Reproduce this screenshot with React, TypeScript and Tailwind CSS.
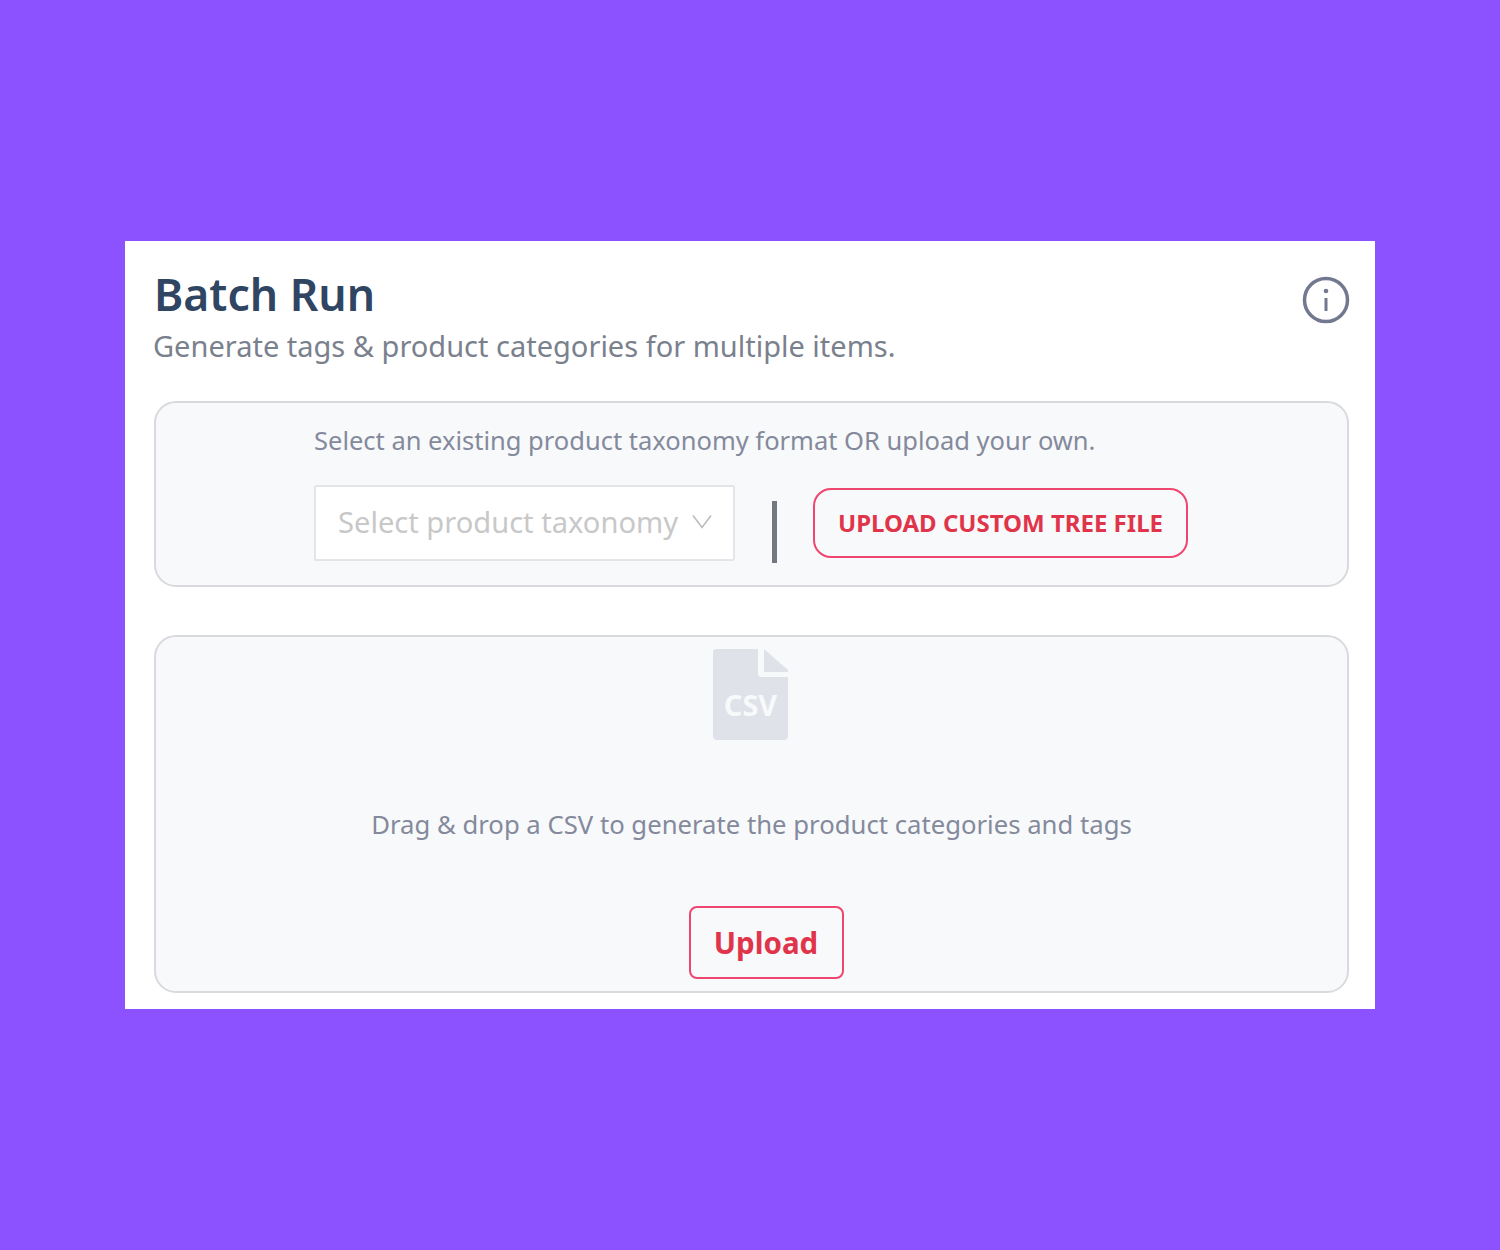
export default function App() {
  return (
    <div className="h-[1250px] bg-[#8c52ff] flex items-center justify-center font-['Noto_Sans',sans-serif]">
      <div className="w-[1250px] h-[768px] bg-white pl-[29px] pr-[26px] pt-[25px] flex flex-col">
        <div className="flex justify-between h-[135px]">
          <div>
            <h1 className="text-[44.5px] leading-[56px] font-semibold text-[#2f4562]">Batch Run</h1>
            <p className="text-[29px] leading-[40px] mt-[4px] text-[#7a818d] -ml-px">Generate tags &amp; product categories for multiple items.</p>
          </div>
          <svg className="mt-[10px] -mr-px" width="48" height="48" viewBox="0 0 48 48" fill="none">
            <circle cx="24" cy="24" r="21.5" stroke="#727890" strokeWidth="3.5" />
            <circle cx="24" cy="15" r="2.3" fill="#727890" />
            <path d="M24 22v13" stroke="#727890" strokeWidth="3" />
          </svg>
        </div>
        <div className="h-[186px] rounded-[22px] border-2 border-[#d8dade] bg-[#f8f9fb] pl-[158px] pt-[19px]">
          <p className="text-[25.5px] leading-[36px] text-[#848a9c]">Select an existing product taxonomy format OR upload your own.</p>
          <div className="flex items-center mt-[24px]">
            <div className="w-[421px] h-[76px] bg-white border-2 border-[#e3e5e8] rounded-[2px] pl-[22px] pr-[20px] flex items-center justify-between">
              <span className="text-[29.1px] text-[#c8c8c8]">Select product taxonomy</span>
              <svg width="22" height="15" viewBox="0 0 22 15" fill="none" className="-mt-[2px] ml-px">
                <path d="M2 1.5l9 12 9-12" stroke="#bcbcbc" strokeWidth="1.6" />
              </svg>
            </div>
            <div className="w-[5px] h-[62px] bg-[#737780] ml-[37px] mt-[19px]" />
            <button className="ml-[36px] w-[375px] h-[70px] rounded-[18px] border-2 border-[#ef4670] text-[24px] font-bold text-[#e0344a] flex items-center justify-center">UPLOAD CUSTOM TREE FILE</button>
          </div>
        </div>
        <div className="mt-[48px] h-[358px] rounded-[22px] border-2 border-[#d8dade] bg-[#f8f9fb] flex flex-col items-center">
          <svg className="mt-[12px] -ml-[2px]" width="75" height="91" viewBox="0 0 75 91">
            <path d="M3 0H45V25a3 3 0 0 0 3 3H75V87a4 4 0 0 1-4 4H4a4 4 0 0 1-4-4V3a3 3 0 0 1 3-3Z" fill="#dfe2e9" />
            <path d="M51 0L75 21V23H51Z" fill="#dfe2e9" />
            <text x="37.5" y="67" textAnchor="middle" fontFamily="'Noto Sans', sans-serif" fontWeight="700" fontSize="29" fill="#f8f9fb">CSV</text>
          </svg>
          <p className="mt-[66px] text-[25.7px] leading-[38px] text-[#848a9c]">Drag &amp; drop a CSV to generate the product categories and tags</p>
          <button className="mt-[62px] ml-[29px] w-[155px] h-[73px] pt-[2px] rounded-[8px] border-2 border-[#ef4670] text-[29.5px] font-bold text-[#e0344a]">Upload</button>
        </div>
      </div>
    </div>
  );
}
